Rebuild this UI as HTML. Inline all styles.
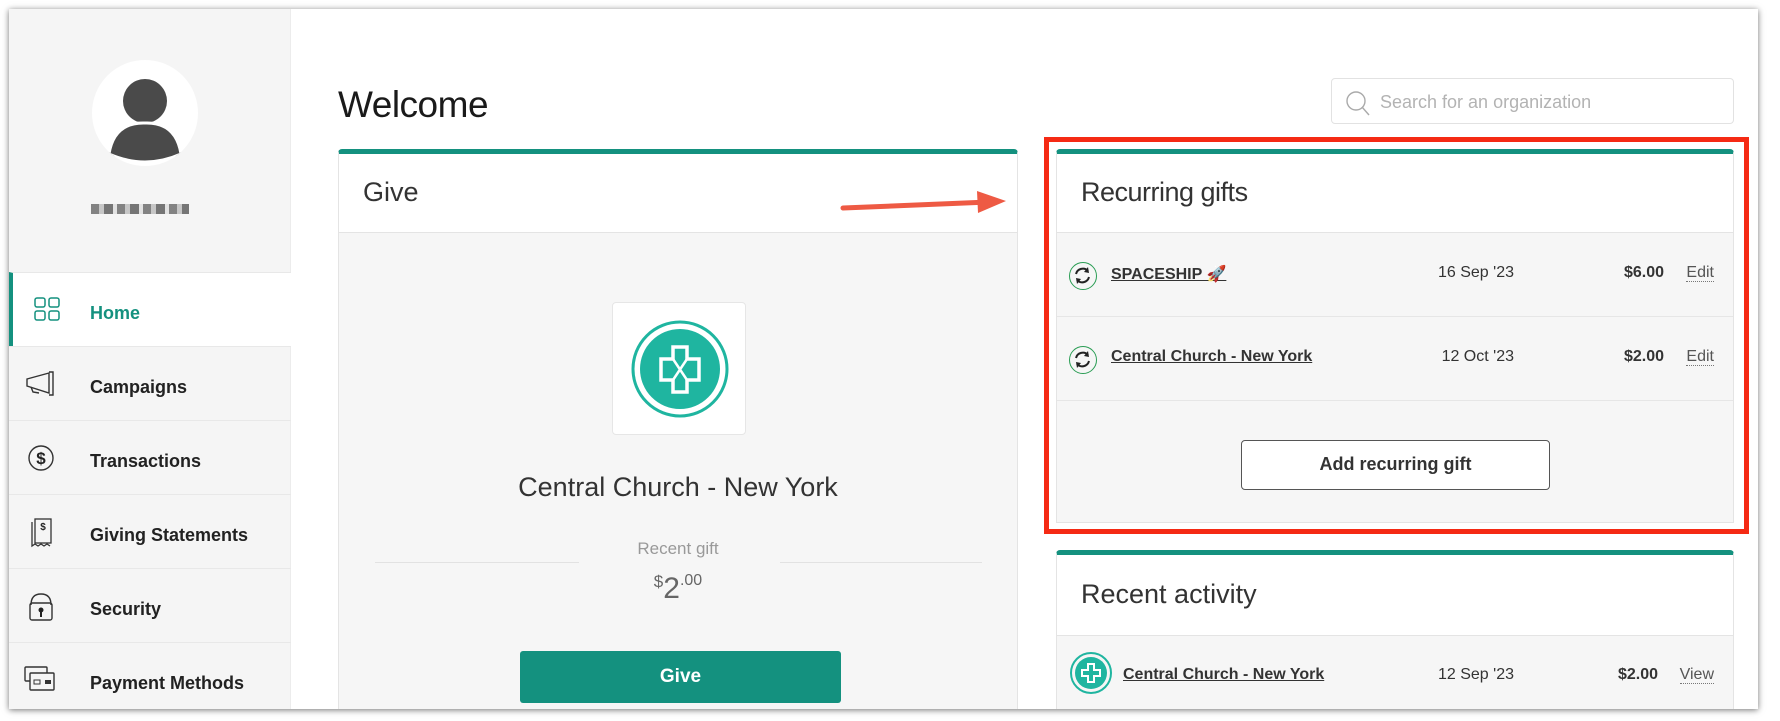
<!DOCTYPE html>
<html><head><meta charset="utf-8"><style>
*{box-sizing:border-box;margin:0;padding:0}
body{width:1780px;height:721px;background:#fff;font-family:"Liberation Sans",Arial,sans-serif;position:relative;overflow:hidden;color:#222}
.frame{position:absolute;left:9px;top:9px;width:1749px;height:700px;background:#fff;box-shadow:0 1px 6px rgba(0,0,0,.55);overflow:hidden}
.side{position:absolute;left:0;top:0;width:282px;height:700px;background:#f5f5f5;border-right:1px solid #ececec}
.av{position:absolute;left:83px;top:51px;width:106px;height:106px;border-radius:50%;background:#fff;overflow:hidden}
.nav{position:absolute;left:0;width:282px;height:74px;border-top:1px solid #e8e8e8;font-weight:bold;font-size:18px;color:#222}
.nav span{position:absolute;left:81px;top:30px}
.nav svg{position:absolute;left:14px;top:22px}
.abs{position:absolute}
.card{position:absolute;background:#f6f6f6;border:1px solid #e4e4e4;border-top:5px solid #14917f;border-radius:4px 4px 0 0}
.hd{background:#fff;border-bottom:1px solid #e4e4e4;font-size:27px;color:#333;padding-left:24px}
.row{position:absolute;left:0;right:0;height:84px;border-bottom:1px solid #e6e6e6;font-size:16px}
.row .n{position:absolute;left:54px;top:31px;font-weight:bold;text-decoration:underline;color:#333}
.row .d{position:absolute;right:219px;top:31px;color:#333}
.row .a{position:absolute;right:69px;top:31px;font-weight:bold;color:#333}
.row .e{position:absolute;right:19px;top:31px;color:#555;border-bottom:1px dotted #777;line-height:17px}
.ic{position:absolute;left:12px;top:29px;width:28px;height:28px;border:1.5px solid #2a9d54;border-radius:50%}
</style></head><body>
<div class="frame">
<div class="side">
 <div class="av"><svg width="106" height="106"><circle cx="53" cy="41" r="22" fill="#4a4a4a"/><path d="M17 94 Q22 62 53 63 Q84 62 89 94 Q53 110 17 94Z" fill="#4a4a4a" stroke="#fff" stroke-width="3"/></svg></div>
 <div class="abs" style="left:82px;top:195px;width:98px;height:10px;background:repeating-linear-gradient(90deg,#666 0 8px,#bbb 8px 13px,#555 13px 22px,#ddd 22px 26px);opacity:.8"></div>
 <div class="nav" style="top:263px;background:#fff;border-left:4px solid #14917f;color:#14917f"><svg width="30" height="30" style="left:20px"><g fill="none" stroke="#14917f" stroke-width="1.5"><rect x="2" y="3" width="10" height="9" rx="2"/><rect x="16" y="3" width="10" height="9" rx="2"/><rect x="2" y="16" width="10" height="9" rx="2"/><rect x="16" y="16" width="10" height="9" rx="2"/></g></svg><span style="left:77px">Home</span></div>
 <div class="nav" style="top:337px"><svg width="34" height="30"><g fill="none" stroke="#333" stroke-width="1.4"><path d="M4 10 L26 4 L26 24 L4 17Z"/><path d="M26 3 L30 3 L30 26 L26 26"/><path d="M8 18 L10 23 L16 24"/></g></svg><span>Campaigns</span></div>
 <div class="nav" style="top:411px"><svg width="34" height="30"><circle cx="18" cy="15" r="12" fill="none" stroke="#333" stroke-width="1.4"/><text x="18" y="21" font-size="17" text-anchor="middle" fill="#222" font-family="Liberation Sans">$</text></svg><span>Transactions</span></div>
 <div class="nav" style="top:485px"><svg width="34" height="34"><g fill="none" stroke="#333" stroke-width="1.3"><rect x="12" y="2" width="16" height="24"/><path d="M9 5 V29 L12 27 L15 29 L18 27 L21 29 L24 27 L27 29"/></g><text x="20" y="13" font-size="10" text-anchor="middle" fill="#222">$</text></svg><span>Giving Statements</span></div>
 <div class="nav" style="top:559px"><svg width="34" height="32"><g fill="none" stroke="#333" stroke-width="1.4"><path d="M8 14 Q8 3 18 3 Q28 3 28 14"/><rect x="7" y="12" width="22" height="17" rx="2"/></g><circle cx="18" cy="19" r="2.5" fill="#222"/><rect x="17" y="20" width="2" height="6" fill="#222"/></svg><span>Security</span></div>
 <div class="nav" style="top:633px"><svg width="34" height="30"><g fill="none" stroke="#333" stroke-width="1.4"><rect x="2" y="2" width="22" height="14" rx="1"/><rect x="7" y="8" width="24" height="17" rx="1" fill="#f5f5f5"/></g><rect x="11" y="15" width="6" height="4" fill="none" stroke="#333"/><rect x="22" y="15" width="6" height="4" fill="#333"/></svg><span>Payment Methods</span></div>
</div>

<div class="abs" style="left:329px;top:75px;font-size:37px;color:#1a1a1a;letter-spacing:-0.5px">Welcome</div>
<div class="abs" style="left:1322px;top:69px;width:403px;height:46px;border:1px solid #e2e2e2;border-radius:4px;background:#fff"><svg class="abs" style="left:12px;top:11px" width="28" height="28"><circle cx="12" cy="11" r="9" fill="none" stroke="#aaa" stroke-width="1.4"/><path d="M18 17 L25 25" stroke="#aaa" stroke-width="1.4"/></svg><span class="abs" style="left:48px;top:13px;font-size:18px;color:#b3b3b3">Search for an organization</span></div>

<!-- Give card -->
<div class="card" style="left:329px;top:140px;width:680px;height:580px">
 <div class="hd" style="height:79px;line-height:76px">Give</div>
 <div class="abs" style="left:273px;top:148px;width:134px;height:133px;background:#fff;border:1px solid #e6e6e6;border-radius:4px">
  <svg width="134" height="133"><circle cx="67" cy="66" r="47" fill="none" stroke="#1fb5a0" stroke-width="3"/><circle cx="67" cy="66" r="40" fill="#1fb5a0"/><path d="M60 44 h14 v12 h12 v21 h-12 v12 h-14 v-12 h-12 v-21 h12z" fill="none" stroke="#fff" stroke-width="3.5"/><path d="M60 56 L74 77 M74 56 L60 77" stroke="#fff" stroke-width="2.5"/></svg>
 </div>
 <div class="abs" style="left:0;width:678px;top:318px;text-align:center;font-size:27px;color:#333">Central Church - New York</div>
 <div class="abs" style="left:0;width:678px;top:385px;text-align:center;font-size:17px;color:#999">Recent gift</div>
 <div class="abs" style="left:36px;top:408px;width:204px;height:1px;background:#e2e2e2"></div>
 <div class="abs" style="left:441px;top:408px;width:202px;height:1px;background:#e2e2e2"></div>
 <div class="abs" style="left:0;width:678px;top:418px;text-align:center;color:#666"><span style="font-size:17px;vertical-align:top">$</span><span style="font-size:30px">2</span><span style="font-size:16px;vertical-align:top">.00</span></div>
 <div class="abs" style="left:181px;top:497px;width:321px;height:52px;background:#14917f;border-radius:3px;color:#fff;font-weight:bold;font-size:19px;text-align:center;line-height:52px">Give</div>
</div>

<!-- arrow -->
<svg class="abs" style="left:820px;top:175px" width="190" height="30"><path d="M14 24 L160 18" stroke="#ee5a44" stroke-width="5" stroke-linecap="round"/><path d="M148 7 L177 17 L149 29Z" fill="#ee5a44"/></svg>

<!-- Recurring -->
<div class="abs" style="left:1035px;top:128px;width:705px;height:397px;border:5px solid #f52a14"></div>
<div class="card" style="left:1047px;top:140px;width:678px;height:374px">
 <div class="hd" style="height:79px;line-height:76px;letter-spacing:-0.5px">Recurring gifts</div>
 <div class="row" style="top:79px"><div class="ic"><svg width="25" height="25"><g fill="none" stroke="#222" stroke-width="2"><path d="M6 11 A7 7 0 0 1 18 8"/><path d="M19 14 A7 7 0 0 1 7 17"/></g><path d="M18 4 L19 10 L14 9Z M7 21 L6 15 L11 16Z" fill="#222"/></svg></div><span class="n">SPACESHIP 🚀</span><span class="d">16 Sep '23</span><span class="a">$6.00</span><span class="e">Edit</span></div>
 <div class="row" style="top:163px"><div class="ic"><svg width="25" height="25"><g fill="none" stroke="#222" stroke-width="2"><path d="M6 11 A7 7 0 0 1 18 8"/><path d="M19 14 A7 7 0 0 1 7 17"/></g><path d="M18 4 L19 10 L14 9Z M7 21 L6 15 L11 16Z" fill="#222"/></svg></div><span class="n">Central Church - New York</span><span class="d">12 Oct '23</span><span class="a">$2.00</span><span class="e">Edit</span></div>
 <div class="abs" style="left:184px;top:286px;width:309px;height:50px;background:#fff;border:1.5px solid #555;border-radius:4px;text-align:center;line-height:47px;font-weight:bold;font-size:18px;color:#333">Add recurring gift</div>
</div>

<!-- Recent activity -->
<div class="card" style="left:1047px;top:541px;width:678px;height:200px">
 <div class="hd" style="height:81px;line-height:78px">Recent activity</div>
 <div class="row" style="top:81px;border:none"><svg class="abs" style="left:12px;top:15px" width="44" height="44"><circle cx="22" cy="22" r="20" fill="none" stroke="#1fb5a0" stroke-width="2"/><circle cx="22" cy="22" r="16" fill="#1fb5a0"/><path d="M19 13 h6 v6 h6 v6 h-6 v6 h-6 v-6 h-6 v-6 h6z" fill="none" stroke="#fff" stroke-width="2"/></svg><span class="n" style="left:66px;top:30px">Central Church - New York</span><span class="d" style="top:30px;right:219px">12 Sep '23</span><span class="a" style="top:30px;right:75px">$2.00</span><span class="e" style="top:30px">View</span></div>
</div>
</div>
</body></html>
